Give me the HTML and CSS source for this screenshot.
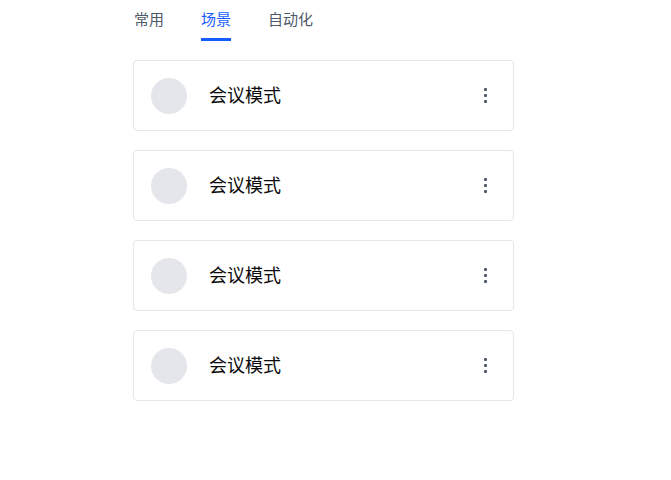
FILE: index.html
```html
<!DOCTYPE html>
<html lang="zh-CN">
<head>
<meta charset="UTF-8">
<meta name="viewport" content="width=device-width, initial-scale=1.0">
<title>场景</title>
<link rel="stylesheet" href="styles.css">
</head>
<body>
  <div class="page">
    <div class="tabs">
      <div class="tab">常用</div>
      <div class="tab active">场景</div>
      <div class="tab">自动化</div>
    </div>
    <div class="scene-list">
      <div class="scene-card">
        <div class="scene-icon"></div>
        <div class="scene-name">会议模式</div>
        <div class="more"><span></span><span></span><span></span></div>
      </div>
      <div class="scene-card">
        <div class="scene-icon"></div>
        <div class="scene-name">会议模式</div>
        <div class="more"><span></span><span></span><span></span></div>
      </div>
      <div class="scene-card">
        <div class="scene-icon"></div>
        <div class="scene-name">会议模式</div>
        <div class="more"><span></span><span></span><span></span></div>
      </div>
      <div class="scene-card">
        <div class="scene-icon"></div>
        <div class="scene-name">会议模式</div>
        <div class="more"><span></span><span></span><span></span></div>
      </div>
    </div>
  </div>
</body>
</html>
```

FILE: styles.css
```css
body {
  margin: 0;
  background-color: #ffffff;
  font-family: "Noto Sans CJK SC", "Noto Sans", sans-serif;
  color: #1d2129;
}

.page {
  padding: 8px 0 0 134px;
  width: 380px;
}

.tabs {
  display: flex;
  gap: 37px;
}

.tab {
  font-size: 15px;
  line-height: 22px;
  color: #4e5969;
  padding-bottom: 8px;
  border-bottom: 3px solid transparent;
}

.tab.active {
  color: #165dff;
  border-bottom-color: #165dff;
}

.scene-list {
  display: flex;
  flex-direction: column;
  gap: 19px;
  margin-top: 19px;
  margin-left: -1px;
}

.scene-card {
  display: flex;
  align-items: center;
  height: 69px;
  padding: 0 16px 0 17px;
  border: 1px solid #e5e6eb;
  border-radius: 4px;
}

.scene-icon {
  width: 36px;
  height: 36px;
  border-radius: 50%;
  background-color: #e5e6eb;
}

.scene-name {
  flex: 1;
  margin-left: 22px;
  padding-bottom: 3px;
  font-size: 18px;
  line-height: 26px;
  color: #0a0a0a;
}

.more {
  display: flex;
  flex-direction: column;
  gap: 3px;
  margin-right: 10px;
}

.more span {
  width: 3px;
  height: 3px;
  background-color: #4e5969;
  border-radius: 1px;
}
```
